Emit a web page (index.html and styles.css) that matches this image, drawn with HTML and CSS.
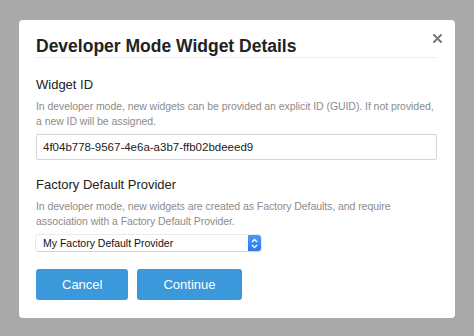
FILE: index.html
```html
<!DOCTYPE html>
<html lang="en">
    <head>
        <meta charset="UTF-8" />
        <meta name="viewport" content="width=device-width, initial-scale=1.0" />
        <title>Developer Mode Widget Details</title>
        <link rel="stylesheet" href="styles.css">
    </head>
    <body>
        <div class="modal">
            <div class="modal-header">
                <h1>Developer Mode Widget Details</h1>
                <button type="button" class="close" aria-label="Close">
                    <svg width="9" height="9" viewBox="0 0 9 9">
                        <path d="M1 1 L8 8 M8 1 L1 8" stroke="#777" stroke-width="2" stroke-linecap="round" />
                    </svg>
                </button>
            </div>

            <form class="modal-body">
                <div class="form-group">
                    <label for="widget-id">Widget ID</label>
                    <p class="help">
                        In developer mode, new widgets can be provided an explicit ID (GUID). If not provided,
                        a new ID will be assigned.
                    </p>
                    <input type="text" id="widget-id" value="4f04b778-9567-4e6a-a3b7-ffb02bdeeed9" />
                </div>

                <div class="form-group">
                    <label for="provider">Factory Default Provider</label>
                    <p class="help">
                        In developer mode, new widgets are created as Factory Defaults, and require
                        association with a Factory Default Provider.
                    </p>
                    <div class="select">
                        <select id="provider">
                            <option>My Factory Default Provider</option>
                        </select>
                        <span class="stepper">
                            <svg width="7" height="11" viewBox="0 0 7 11">
                                <path d="M1 4 L3.5 1.5 L6 4 M1 7 L3.5 9.5 L6 7" fill="none" stroke="#fff" stroke-width="1.3" />
                            </svg>
                        </span>
                    </div>
                </div>

                <div class="actions">
                    <button type="button" class="btn">Cancel</button>
                    <button type="submit" class="btn">Continue</button>
                </div>
            </form>
        </div>
    </body>
</html>
```

FILE: styles.css
```css
html,
body {
    height: 100%;
}
body {
    font-family: "Liberation Sans", Arial, sans-serif;
    margin: 0;
    padding: 20px 19px 0;
    box-sizing: border-box;
    background-color: #a9a9a9;
    color: #222;
}
.modal {
    background-color: #fff;
    border-radius: 4px;
    padding: 15px 18px 18px 17px;
}
.modal-header {
    display: flex;
    justify-content: space-between;
    align-items: flex-start;
    border-bottom: 1px solid #eee;
}
h1 {
    margin: 0;
    font-size: 17.5px;
    line-height: 22px;
    font-weight: bold;
    color: #222;
}
.close {
    background: none;
    border: none;
    padding: 0;
    margin: -1px -5px 0 0;
    height: 9px;
    cursor: pointer;
    display: flex;
}
.form-group {
    margin-top: 19px;
}
.form-group + .form-group {
    margin-top: 17px;
}
label {
    display: block;
    font-size: 13px;
    line-height: 16px;
    color: #222;
}
.help {
    margin: 6px 0 5px;
    font-size: 10.5px;
    line-height: 15px;
    letter-spacing: -0.06px;
    color: #8c8c8c;
}
input[type="text"] {
    display: block;
    box-sizing: border-box;
    width: 100%;
    height: 26px;
    margin: 0;
    padding: 0 6px;
    border: 1px solid #d4d4d4;
    border-radius: 2px;
    font-family: inherit;
    font-size: 11.5px;
    color: #222;
}
.select {
    display: flex;
    width: 225px;
    height: 16px;
    margin-top: 6px;
    border-radius: 3px;
    box-shadow: 0 0 0 1px rgba(0, 0, 0, 0.08), 0 1px 1px rgba(0, 0, 0, 0.1);
    overflow: hidden;
}
.select select {
    flex: 1;
    appearance: none;
    -webkit-appearance: none;
    border: none;
    margin: 0;
    padding: 0 0 0 7px;
    background: #fff;
    font-family: inherit;
    font-size: 10.5px;
    color: #111;
}
.stepper {
    width: 13px;
    display: flex;
    align-items: center;
    justify-content: center;
    background: linear-gradient(#4c9bf7, #2a78ec);
}
.actions {
    display: flex;
    gap: 9px;
    margin-top: 18px;
}
.btn {
    height: 31px;
    padding: 0 26px;
    border: none;
    border-radius: 3px;
    background-color: #3a98db;
    color: #fff;
    font-family: inherit;
    font-size: 13px;
    cursor: pointer;
}
.btn:hover {
    background-color: #2980b9;
}
```
